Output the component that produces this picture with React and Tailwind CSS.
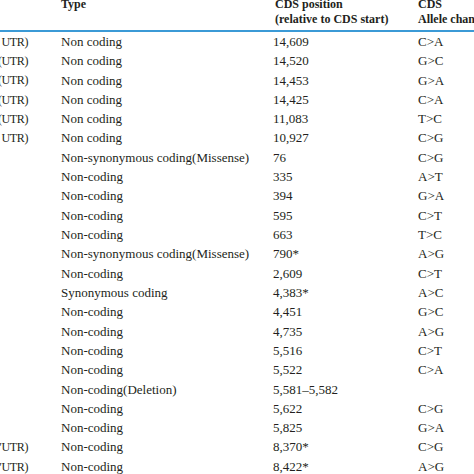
import React from "react";

const rows = [
  ["UTR)", "Non coding", "14,609", "C>A"],
  ["(UTR)", "Non coding", "14,520", "G>C"],
  ["(UTR)", "Non coding", "14,453", "G>A"],
  ["(UTR)", "Non coding", "14,425", "C>A"],
  ["(UTR)", "Non coding", "11,083", "T>C"],
  ["UTR)", "Non coding", "10,927", "C>G"],
  ["", "Non-synonymous coding(Missense)", "76", "C>G"],
  ["", "Non-coding", "335", "A>T"],
  ["", "Non-coding", "394", "G>A"],
  ["", "Non-coding", "595", "C>T"],
  ["", "Non-coding", "663", "T>C"],
  ["", "Non-synonymous coding(Missense)", "790*", "A>G"],
  ["", "Non-coding", "2,609", "C>T"],
  ["", "Synonymous coding", "4,383*", "A>C"],
  ["", "Non-coding", "4,451", "G>C"],
  ["", "Non-coding", "4,735", "A>G"],
  ["", "Non-coding", "5,516", "C>T"],
  ["", "Non-coding", "5,522", "C>A"],
  ["", "Non-coding(Deletion)", "5,581\u20135,582", ""],
  ["", "Non-coding", "5,622", "C>G"],
  ["", "Non-coding", "5,825", "G>A"],
  ["3\u2032UTR)", "Non-coding", "8,370*", "C>G"],
  ["3\u2032UTR)", "Non-coding", "8,422*", "A>G"],
];

export default function App() {
  return (
    <div className="w-[474px] h-[474px] overflow-hidden bg-white text-[#231f20] font-['Liberation_Serif',serif]">
      <div className="mt-[-3px] flex pb-[3px] border-b-2 border-[#3b9ad6] text-[12px] font-bold leading-[15px] whitespace-nowrap">
        <div className="w-[61px] shrink-0"></div>
        <div className="w-[214px] shrink-0">Type</div>
        <div className="w-[143px] shrink-0">
          <div>CDS position</div>
          <div>(relative to CDS start)</div>
        </div>
        <div className="shrink-0">
          <div>CDS</div>
          <div>Allele change</div>
        </div>
      </div>
      <div className="flex flex-col text-[13px] whitespace-nowrap">
        {rows.map((r, i) => (
          <div key={i} className="flex h-[19.32px] items-center">
            <div className="w-[61px] shrink-0 overflow-hidden flex justify-end pr-[33px] text-[12px] tracking-[-0.4px]">
              <span>{r[0]}</span>
            </div>
            <div className="w-[212px] shrink-0">{r[1]}</div>
            <div className="w-[145px] shrink-0">{r[2]}</div>
            <div className="shrink-0">{r[3]}</div>
          </div>
        ))}
      </div>
    </div>
  );
}
